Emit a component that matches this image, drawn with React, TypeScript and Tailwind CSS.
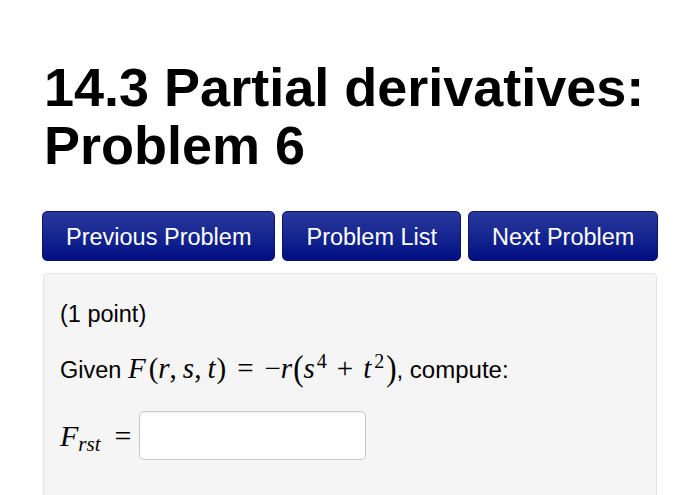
import React from "react";

const sans = { fontFamily: '"Liberation Sans", Arial, sans-serif' };
const serif = { fontFamily: '"Liberation Serif", "Times New Roman", serif' };

function NavButton({ label }: { label: string }) {
  return (
    <button
      type="button"
      className="h-[50px] shrink-0 whitespace-nowrap rounded-[5px] border border-[#0b1566] bg-linear-to-b from-[#2a389c] to-[#030c84] px-[23px] pt-[3px] text-[23.5px] leading-none text-white"
    >
      {label}
    </button>
  );
}

function V({ children }: { children: React.ReactNode }) {
  return <span className="italic">{children}</span>;
}

export default function App() {
  return (
    <div className="min-h-[495px] overflow-hidden bg-white text-black" style={sans}>
      <div className="pl-[44px] pr-[40px] pt-[58px]">
        <h1 className="text-[54px] font-bold leading-[58px]">
          14.3 Partial derivatives:
          <br />
          Problem 6
        </h1>

        <div className="-ml-[2px] mt-[37px] flex gap-[7px]">
          <NavButton label="Previous Problem" />
          <NavButton label="Problem List" />
          <NavButton label="Next Problem" />
        </div>

        <div className="-ml-[1px] mt-[12px] h-[240px] w-[614px] rounded-[4px] border border-[#e3e3e3] bg-[#f5f5f5] px-[16px] pt-[24px] text-[23.5px] leading-[32px]">
          <p>(1 point)</p>

          <p className="mt-[22px] flex items-baseline">
            <span>Given&nbsp;</span>
            <span className="whitespace-nowrap text-[29px]" style={serif}>
              <V>F</V>
              <span className="ml-[3px]">(</span>
              <V>r</V>,<span className="ml-[6px]" />
              <V>s</V>,<span className="ml-[6px]" />
              <V>t</V>
              <span className="ml-[1px]">)</span>
              <span className="mx-[11px]">=</span>
              −<V>r</V>
              <span className="ml-[1px] inline-block scale-y-[1.15] text-[31px]">(</span>
              <V>s</V>
              <sup className="ml-[2px] text-[20px]">4</sup>
              <span className="mx-[10px]">+</span>
              <V>t</V>
              <sup className="ml-[3px] text-[20px]">2</sup>
              <span className="ml-[2px] inline-block scale-y-[1.15] text-[31px]">)</span>
            </span>
            <span className="text-[24px]">, compute:</span>
          </p>

          <div className="mt-[25px] flex items-center">
            <span className="whitespace-nowrap text-[30px]" style={serif}>
              <V>F</V>
              <sub className="text-[21px] italic">rst</sub>
              <span className="ml-[14px] mr-[8px]">=</span>
            </span>
            <input
              type="text"
              className="h-[49px] w-[227px] rounded-[5px] border border-[#c8c8c8] bg-white shadow-[inset_0_1px_2px_rgba(0,0,0,0.06)]"
            />
          </div>
        </div>
      </div>
    </div>
  );
}
